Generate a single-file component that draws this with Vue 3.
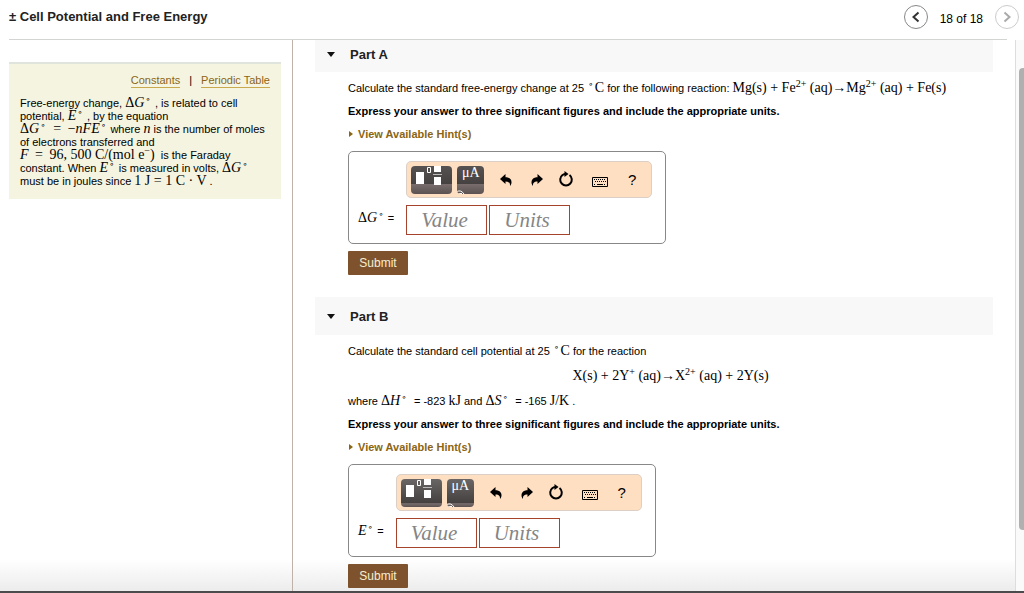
<script setup>
const parts = [
  { id: 'a', title: 'Part A', symbol: 'G', delta: true },
  { id: 'b', title: 'Part B', symbol: 'E', delta: false },
]
</script>

<template>
  <div class="page">
    <header class="topbar">
      <h1>± Cell Potential and Free Energy</h1>
      <nav class="pager" aria-label="Items">
        <button class="round" type="button" aria-label="Previous item">
          <svg width="10" height="12" viewBox="0 0 10 12"><path d="M7.500 1.500 2.500 6l5 4.500" /></svg>
        </button>
        <span>18 of 18</span>
        <button class="round off" type="button" aria-label="Next item">
          <svg width="10" height="12" viewBox="0 0 10 12"><path d="M2.500 1.500 7.500 6l-5 4.500" /></svg>
        </button>
      </nav>
    </header>

    <div class="columns">
      <aside class="side">
        <div class="note">
          <div class="links"><a href="#constants">Constants</a><span>|</span><a href="#table">Periodic Table</a></div>
          <p>
            <span class="line">Free-energy change, <span class="m">Δ<i>G</i><sup class="deg">∘</sup></span> , is related to cell</span>
            <span class="line">potential, <span class="m"><i>E</i><sup class="deg">∘</sup></span> , by the equation</span>
            <span class="line"><span class="m">Δ<i>G</i><sup class="deg">∘</sup> <b>=</b> −<i>nFE</i><sup class="deg">∘</sup></span> where <span class="m"><i>n</i></span> is the number of moles</span>
            <span class="line">of electrons transferred and</span>
            <span class="line"><span class="m"><i>F</i> <b>=</b> 96, 500 C/(mol e<sup>−</sup>)</span>&nbsp; is the Faraday</span>
            <span class="line">constant. When <span class="m"><i>E</i><sup class="deg">∘</sup></span>&nbsp;is measured in volts, <span class="m">Δ<i>G</i><sup class="deg">∘</sup></span></span>
            <span class="line">must be in joules since <span class="m">1 J = 1 C · V</span> .</span>
          </p>
        </div>
      </aside>

      <main class="content">
        <section v-for="p in parts" :key="p.id" class="part">
          <button class="heading" type="button"><span class="tri"></span>{{ p.title }}</button>
          <div class="body">
            <p v-if="p.id === 'a'" class="text">Calculate the standard free-energy change at 25 <span class="m"><sup class="deg">∘</sup>C</span> for the following reaction: <span class="m">Mg(s) + Fe<sup>2+</sup> (aq)→Mg<sup>2+</sup> (aq) + Fe(s)</span></p>
            <template v-else>
              <p class="text">Calculate the standard cell potential at 25 <span class="m"><sup class="deg">∘</sup>C</span> for the reaction</p>
              <p class="text equation"><span class="m">X(s) + 2Y<sup>+</sup> (aq)→X<sup>2+</sup> (aq) + 2Y(s)</span></p>
              <p class="text">where <span class="m">Δ<i>H</i><sup class="deg">∘</sup></span>&nbsp; = -823 <span class="m">kJ</span> and <span class="m">Δ<i>S</i><sup class="deg">∘</sup></span>&nbsp; = -165 <span class="m">J/K</span> .</p>
            </template>
            <p class="text strong">Express your answer to three significant figures and include the appropriate units.</p>
            <a class="hint" :href="'#hints-' + p.id"><span class="caret"></span>View Available Hint(s)</a>

            <div class="answer">
              <span class="symbol"><span class="m"><template v-if="p.delta">Δ</template><i>{{ p.symbol }}</i><sup class="deg">∘</sup></span> =</span>
              <div class="entry">
                <div class="tools">
                  <button class="dark templates" type="button" aria-label="Templates">
                    <svg width="41" height="28" viewBox="0 0 41 28">
                      <path class="w" d="M5 6h8v12H5zM23 0h7v6h-7zM23 11h7v8h-7z" />
                      <path class="lw" d="M16.500 1.500h3v5h-3z" />
                      <path class="gw" d="M22 8.500h9" />
                    </svg>
                  </button>
                  <button class="dark units" type="button" aria-label="Units symbols">
                    <span>μA</span>
                    <svg width="8" height="4" viewBox="0 0 8 4"><path class="lw" d="M0 1.500Q4-.5 7 4M1 3.500h4" /></svg>
                  </button>
                  <button class="tool" type="button" aria-label="Undo">
                    <svg width="14" height="14" viewBox="0 0 14 14"><path class="k" d="M1 6 6.500 1v3.200c4 .1 6 2 6 5 0 1.600-.6 2.800-1.500 3.800.2-3-.8-4.500-4.500-4.600V11z" /></svg>
                  </button>
                  <button class="tool redo" type="button" aria-label="Redo">
                    <svg width="14" height="14" viewBox="0 0 14 14"><path class="k" d="M13 6 7.500 1v3.200c-4 .1-6 2-6 5 0 1.600.6 2.800 1.500 3.800-.2-3 .8-4.500 4.500-4.600V11z" /></svg>
                  </button>
                  <button class="tool reset" type="button" aria-label="Reset">
                    <svg width="16" height="18" viewBox="0 0 16 18"><path class="s" d="M4.500 4A5.800 5.800 0 1 0 11.500 4M4.500 4Q6 3 8 3" /><path class="k" d="M6.500 0 10.500 3 6.500 6z" /></svg>
                  </button>
                  <button class="tool keys" type="button" aria-label="Keyboard shortcuts">
                    <svg width="17" height="12" viewBox="0 0 17 12"><path class="o" d="M.5 1.500h15v9H.5z" /><path class="d" d="M2 3.500h12M3 5.500h11M2 8.500h2M12 8.500h2" /><path class="o" d="M5 8.500h6" /></svg>
                  </button>
                  <button class="tool help" type="button" aria-label="Help">?</button>
                </div>
                <div class="fields">
                  <input type="text" placeholder="Value" aria-label="Value" />
                  <input type="text" placeholder="Units" aria-label="Units" />
                </div>
              </div>
            </div>
            <button class="submit" type="button">Submit</button>
          </div>
        </section>
      </main>

      <div class="track"><div class="thumb"></div></div>
    </div>
  </div>
</template>

<style>
body {
  margin: 0;
}
</style>

<style scoped>
.page {
  box-sizing: border-box;
  height: 100vh;
  overflow: hidden;
  display: flex;
  flex-direction: column;
  border-bottom: 2px solid #4b4b4d;
  background: linear-gradient(to top, #ececec 0, #fff 32px);
  color: #000;
  font-family: "Liberation Sans", Arial, sans-serif;
  font-size: 11px;
}
button {
  font-family: inherit;
  padding: 0;
  border: 0;
  background: none;
  color: inherit;
}
svg {
  display: block;
  fill: none;
}
.topbar {
  flex: none;
  box-sizing: border-box;
  height: 40px;
  margin: 0 17px 0 9px;
  border-bottom: 1px solid #d3d5d3;
  display: flex;
  justify-content: space-between;
}
h1 {
  margin: 9px 0 0;
  font-size: 13px;
  line-height: 16px;
  color: #222;
}
.pager {
  display: flex;
  align-items: center;
  gap: 12px;
  height: 24px;
  margin: 5px -12px 0 0;
  font-size: 12px;
}
.pager span {
  padding-top: 3px;
}
.round {
  box-sizing: border-box;
  width: 24px;
  height: 24px;
  border: 1px solid #888;
  border-radius: 50%;
  display: grid;
  place-items: center;
}
.round svg {
  stroke: #333;
  stroke-width: 2;
}
.round.off {
  border-color: #ccc;
}
.round.off svg {
  stroke: #aaa;
}
.columns {
  flex: 1;
  min-height: 0;
  display: flex;
}
.side {
  flex: none;
  box-sizing: border-box;
  width: 293px;
  padding: 22px 11px 0 9px;
  border-right: 1px solid #bfb2a6;
}
.note {
  box-sizing: border-box;
  padding: 9px 11px 11px;
  border-top: 2px solid #dfe4dc;
  background: #f5f4e0;
}
.links {
  display: flex;
  justify-content: flex-end;
  gap: 9px;
  line-height: 14px;
}
a {
  color: #8a6516;
}
.links a {
  text-decoration: none;
  border-bottom: 1px solid #c9a94e;
}
.note p {
  margin: 9px 0 0;
}
.line {
  display: block;
  height: 13px;
  line-height: 13px;
  white-space: nowrap;
}
.m {
  font-family: "Liberation Serif", "Times New Roman", serif;
  font-size: 14px;
  line-height: 1px;
  white-space: nowrap;
}
.m sup {
  font-size: 10px;
  line-height: 1px;
  vertical-align: 5px;
}
.m .deg {
  margin: 0 1px;
  font-family: "DejaVu Sans", sans-serif;
  font-size: 9px;
}
.m b {
  margin: 0 3px;
  font-weight: normal;
}
.content {
  flex: 1;
  min-width: 0;
  padding: 0 22px;
}
.heading {
  box-sizing: border-box;
  width: 100%;
  height: 38px;
  padding-left: 12px;
  display: flex;
  align-items: center;
  gap: 15px;
  background: #f8f8f8;
  font-size: 13px;
  font-weight: bold;
  color: #222;
}
.part:first-child .heading {
  height: 32px;
  padding-bottom: 4px;
}
.tri {
  border: 4px solid transparent;
  border-top: 5px solid #111;
  border-bottom: 0;
}
.body {
  padding: 8px 0 22px 33px;
}
.text {
  margin: 0 0 7px;
  line-height: 16px;
}
.equation {
  margin: 9px 0;
  text-align: center;
}
.strong {
  font-weight: bold;
}
.hint {
  display: flex;
  align-items: center;
  gap: 5px;
  line-height: 16px;
  font-weight: bold;
  text-decoration: none;
}
.caret {
  border: 3px solid transparent;
  border-left: 4px solid #8a6516;
  border-right: 0;
  margin-left: 1px;
}
.answer {
  box-sizing: border-box;
  width: fit-content;
  height: 93px;
  margin-top: 9px;
  padding: 9px 13px 0 9px;
  border: 1px solid #888;
  border-radius: 5px;
  display: flex;
  align-items: flex-end;
  gap: 12px;
}
.symbol {
  line-height: 16px;
  padding-bottom: 17px;
}
.entry {
  display: flex;
  flex-direction: column;
  gap: 7px;
  padding-bottom: 8px;
}
.tools {
  box-sizing: border-box;
  height: 37px;
  padding: 0 13px 0 4px;
  border: 1px solid #dccfc5;
  border-radius: 5px;
  background: #ffdfc2;
  display: flex;
  align-items: center;
}
.dark {
  height: 28px;
  border-radius: 4px;
  background: linear-gradient(#565252 0, #454141 64%, #786c6c 66%, #5c5252 100%);
  overflow: hidden;
}
.part:last-child .dark {
  background: linear-gradient(#6a6666 0, #454141 84%, #786c6c 88%, #5c5252 100%);
}
.templates {
  width: 41px;
  margin-right: 5px;
}
.units {
  width: 27px;
  margin-right: 15px;
  display: flex;
  flex-direction: column;
  justify-content: space-between;
  color: #fff;
  font-family: "Liberation Serif", serif;
  font-size: 14px;
  line-height: 14px;
}
.units span {
  align-self: center;
}
.w {
  fill: #fff;
}
.lw {
  stroke: #fff;
}
.gw {
  stroke: #bbb;
}
.k {
  fill: #000;
}
.s {
  stroke: #000;
  stroke-width: 2;
}
.o {
  stroke: #000;
}
.d {
  stroke: #000;
  stroke-dasharray: 1 1;
}
.tool {
  width: 14px;
  margin-right: 17px;
  display: grid;
  place-items: center;
}
.redo {
  margin-right: 14px;
}
.reset {
  width: 16px;
  margin-right: 18px;
}
.keys {
  width: 17px;
  padding-top: 4px;
}
.help {
  width: 12px;
  margin-right: 0;
  font-size: 15px;
}
.fields {
  display: flex;
  gap: 2px;
}
input {
  box-sizing: border-box;
  width: 81px;
  height: 30px;
  padding: 0 4px 0 14px;
  border: 1px solid #a5432c;
  border-radius: 0;
  background: #fff;
  font-family: "Liberation Serif", "Times New Roman", serif;
  font-style: italic;
  font-size: 21px;
}
input::placeholder {
  color: #858585;
}
.submit {
  display: block;
  width: 60px;
  height: 24px;
  margin-top: 7px;
  border-radius: 1px;
  background: #7e522c;
  color: #f8edce;
  font-size: 12px;
}
.track {
  flex: none;
  box-sizing: border-box;
  width: 9px;
  border-left: 1px solid #ddd;
  background: #fafafa;
  padding: 28px 0 0 3px;
}
.thumb {
  height: 462px;
  border-radius: 4px 0 0 4px;
  background: #b0b0b0;
}
</style>
